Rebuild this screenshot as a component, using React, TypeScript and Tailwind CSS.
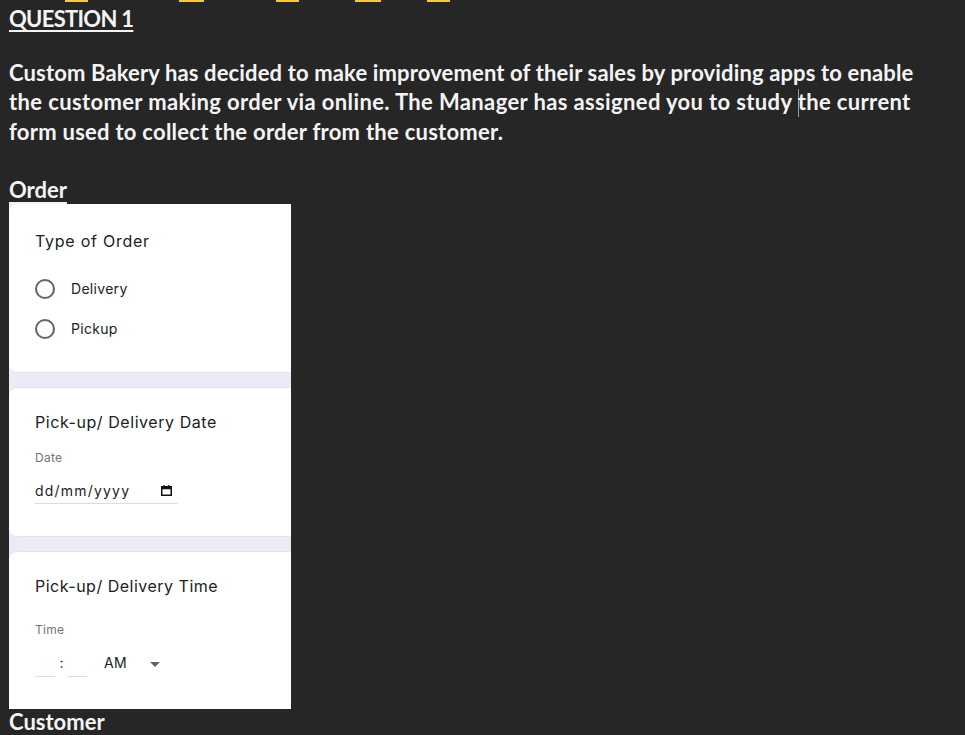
import React from "react";

const bodyFont = { fontFamily: "Lato, 'Open Sans', sans-serif" };

export default function App() {
  return (
    <div
      className="w-full h-[735px] overflow-hidden bg-[#262626] text-[#f4f4f4] pl-[9px]"
      style={bodyFont}
    >
      {/* yellow marks */}
      <div className="flex h-[2px]">
        <div className="ml-[56px] w-[23px] bg-[#ffc928]" />
        <div className="ml-[91px] w-[25px] bg-[#ffc928]" />
        <div className="ml-[72px] w-[23px] bg-[#ffc928]" />
        <div className="ml-[56px] w-[26px] bg-[#ffc928]" />
        <div className="ml-[46px] w-[23px] bg-[#ffc928]" />
      </div>

      <div className="mt-[2px] h-[29px] leading-[29px] text-[22px] font-bold tracking-[-0.7px]">
        <span className="underline decoration-2 underline-offset-[3px]">QUESTION 1</span>
      </div>

      <p className="mt-[25px] text-[22px] leading-[29px] font-bold">
        <span className="tracking-[0.14px]">
          Custom Bakery has decided to make improvement of their sales by providing apps to enable
        </span>
        <br />
        <span className="tracking-[0.37px]">
          the customer making order via online. The Manager has assigned you to study{" "}
          <span className="inline-block w-px h-[28px] bg-[#9a9a9a] align-[-7px] -mr-px" />
          the current
        </span>
        <br />
        <span className="tracking-[0.26px]">form used to collect the order from the customer.</span>
      </p>

      <div className="mt-[29px] h-[29px] leading-[29px] text-[22px] font-bold">
        <span className="underline decoration-2 underline-offset-[4px]">Order</span>
      </div>

      {/* form */}
      <div
        className="w-[282px] h-[505px] overflow-hidden bg-[#ede9f7] text-[#202124]"
        style={{ fontFamily: "Inter, 'Open Sans', sans-serif" }}
      >
        {/* card 1 */}
        <div className="w-[330px] h-[169px] bg-white rounded-[8px] border-b border-[#e3e1ea] pl-[26px] pt-[27px]">
          <div className="text-[16px] leading-[20px] tracking-[0.75px]">Type of Order</div>
          <div className="mt-[28px] flex items-center h-[20px]">
            <span className="w-[20px] h-[20px] rounded-full border-2 border-[#5f6368] box-border" />
            <span className="ml-[16px] text-[14px] leading-[20px] tracking-[0.3px]">Delivery</span>
          </div>
          <div className="mt-[20px] flex items-center h-[20px]">
            <span className="w-[20px] h-[20px] rounded-full border-2 border-[#5f6368] box-border" />
            <span className="ml-[16px] text-[14px] leading-[20px] tracking-[0.3px]">Pickup</span>
          </div>
        </div>

        {/* card 2 */}
        <div className="mt-[14px] w-[330px] h-[150px] bg-white rounded-[8px] border-t border-b border-[#e3e1ea] pl-[26px] pt-[24px]">
          <div className="text-[16px] leading-[20px] tracking-[0.56px]">Pick-up/ Delivery Date</div>
          <div className="mt-[19px] text-[12px] leading-[14px] text-[#70757a] tracking-[0.3px]">Date</div>
          <div className="mt-[13px] w-[143px] h-[26px] border-b border-[#dadce0] flex items-center justify-between pr-[6px]">
            <span className="text-[14px] leading-[20px] tracking-[1.2px] text-[#202124]">dd/mm/yyyy</span>
            <svg width="11" height="11" viewBox="0 0 11 11">
              <rect x="0.75" y="1.75" width="9.5" height="8.5" fill="none" stroke="#111" strokeWidth="1.5" />
              <rect x="0.75" y="1.75" width="9.5" height="2.5" fill="#111" />
              <rect x="2.5" y="0" width="1.3" height="2" fill="#111" />
              <rect x="7.2" y="0" width="1.3" height="2" fill="#111" />
            </svg>
          </div>
        </div>

        {/* card 3 */}
        <div className="mt-[14px] w-[330px] h-[170px] bg-white rounded-[8px] border-t border-[#e3e1ea] pl-[26px] pt-[24px]">
          <div className="text-[16px] leading-[20px] tracking-[0.5px]">Pick-up/ Delivery Time</div>
          <div className="mt-[27px] text-[12px] leading-[14px] text-[#70757a] tracking-[0.3px]">Time</div>
          <div className="mt-[20px] flex items-end h-[20px]">
            <span className="w-[20px] h-[20px] border-b border-[#dadce0]" />
            <span className="w-[13px] text-center text-[14px] leading-[20px] -translate-y-[4px]">:</span>
            <span className="w-[19px] h-[20px] border-b border-[#dadce0]" />
            <span className="ml-[17px] text-[14px] leading-[20px] tracking-[0.3px] -translate-y-[4px]">AM</span>
            <svg className="ml-[23px] -translate-y-[10px]" width="10" height="5" viewBox="0 0 10 5">
              <path d="M0 0 L10 0 L5 5 Z" fill="#5f6368" />
            </svg>
          </div>
        </div>
      </div>

      <div className="h-[26px] leading-[26px] text-[22px] font-bold">Customer</div>
    </div>
  );
}
